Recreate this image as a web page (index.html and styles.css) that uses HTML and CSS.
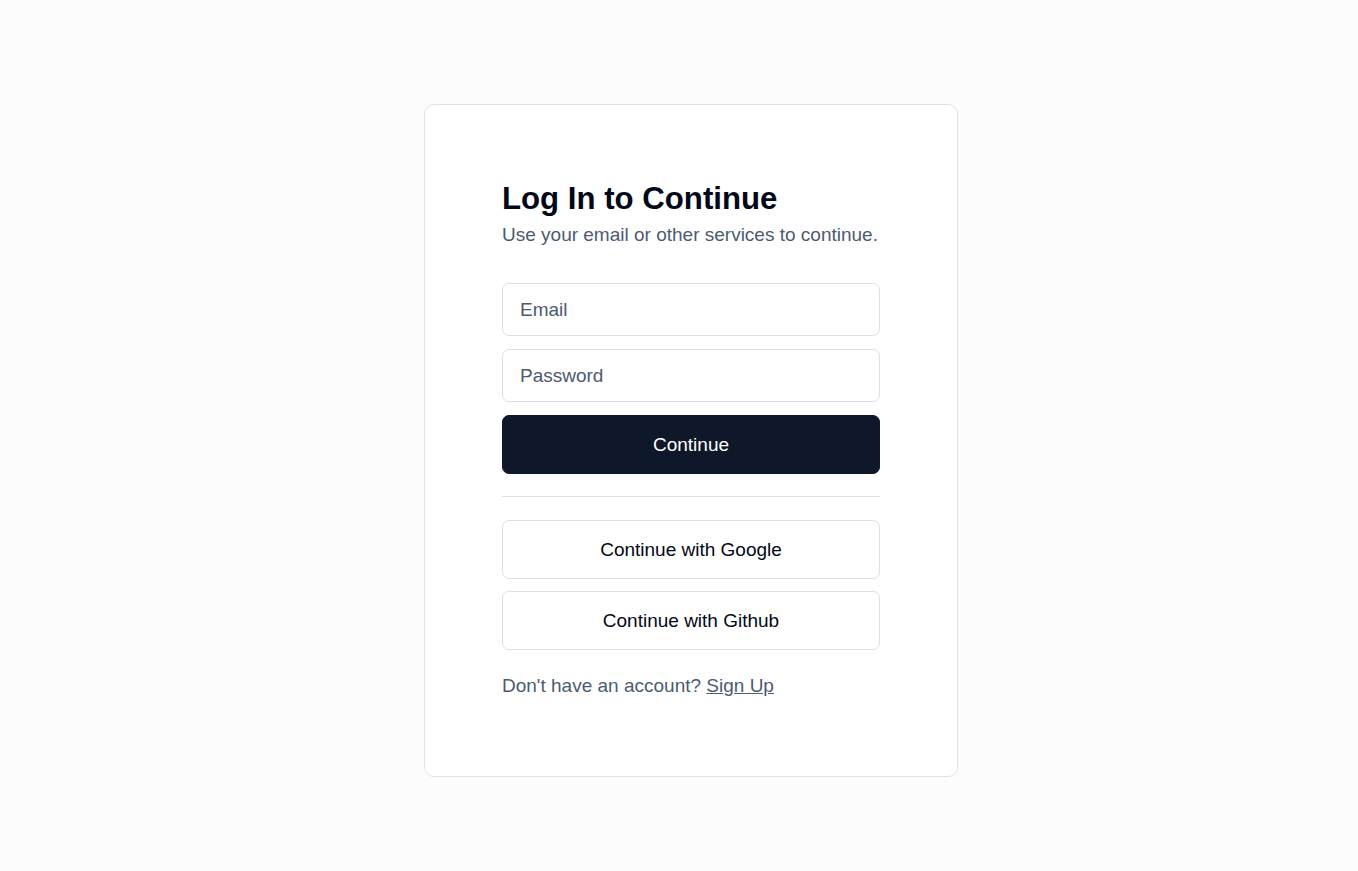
FILE: index.html
```html
<!DOCTYPE html>
<html lang="en">
<head>
<meta charset="utf-8">
<title>Log In</title>
<link rel="stylesheet" href="styles.css">
</head>
<body>
<main class="page">
  <section class="card">
    <h1 class="title">Log In to Continue</h1>
    <p class="subtitle">Use your email or other services to continue.</p>
    <form class="form">
      <input class="field" type="email" placeholder="Email">
      <input class="field" type="password" placeholder="Password">
      <button class="btn btn-primary" type="button">Continue</button>
    </form>
    <hr class="sep">
    <div class="providers">
      <button class="btn btn-outline" type="button">Continue with Google</button>
      <button class="btn btn-outline" type="button">Continue with Github</button>
    </div>
    <p class="foot">Don't have an account? <a class="link" href="#">Sign Up</a></p>
  </section>
</main>
</body>
</html>
```

FILE: styles.css
```css
* { box-sizing: border-box; }
html, body { margin: 0; padding: 0; }
body {
  background: #fcfcfc;
  font-family: "Liberation Sans", Arial, sans-serif;
  color: #020817;
}
.page {
  min-height: 871px;
  display: flex;
  justify-content: center;
  align-items: flex-start;
  padding: 104px 0 0 24px;
}
.card {
  width: 534px;
  height: 673px;
  background: #ffffff;
  border: 1px solid #dde3ee;
  border-radius: 10px;
  padding: 76px 77px 0 77px;
  display: flex;
  flex-direction: column;
}
.title {
  margin: 0;
  font-size: 31.2px;
  line-height: 36px;
  font-weight: 700;
  color: #020817;
}
.subtitle {
  margin: 4px 0 0 0;
  font-size: 19px;
  line-height: 28px;
  color: #4b5b73;
  white-space: nowrap;
}
.form {
  margin-top: 34px;
  display: flex;
  flex-direction: column;
  gap: 13px;
}
.field {
  height: 53px;
  border: 1px solid #d9e0ea;
  border-radius: 7px;
  padding: 0 17px;
  font-family: inherit;
  font-size: 19px;
  color: #0f172a;
  background: #fff;
  outline: none;
}
.field::placeholder { color: #4b5b73; }
.btn {
  height: 59px;
  border-radius: 7px;
  font-family: inherit;
  font-size: 19px;
  cursor: pointer;
}
.btn-primary {
  background: #0f172a;
  color: #ffffff;
  border: 1px solid #0f172a;
}
.sep {
  margin: 22px 0 0 0;
  border: 0;
  border-top: 1px solid #dde3ee;
  height: 0;
}
.providers {
  margin-top: 23px;
  display: flex;
  flex-direction: column;
  gap: 12px;
}
.btn-outline {
  background: #ffffff;
  color: #020817;
  border: 1px solid #d9e0ea;
}
.foot {
  margin: 24px 0 0 0;
  font-size: 19px;
  line-height: 24px;
  color: #4b5b73;
}
.link { color: #4b5b73; text-decoration: underline; }
```
